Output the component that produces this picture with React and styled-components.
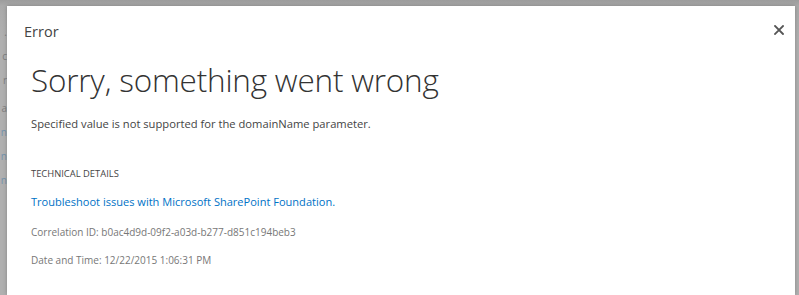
import React from "react";
import styled, { createGlobalStyle } from "styled-components";

const Global = createGlobalStyle`
  html, body { margin: 0; padding: 0; }
  body { width: 799px; height: 295px; overflow: hidden; font-family: "Open Sans", "Noto Sans", sans-serif; }
`;

const Backdrop = styled.div`
  width: 799px;
  height: 295px;
  background: linear-gradient(#9c9c9c 0px, #aaaaaa 6px, #b0b0b0 40px, #b0b0b0 100%);
  display: flex;
  box-sizing: border-box;
  padding: 6px 4px 0 0;
  overflow: hidden;
`;

const PageStrip = styled.div`
  width: 7px;
  flex: none;
  display: flex;
  flex-direction: column;
  align-items: flex-end;
  padding-top: 20px;
  gap: 12px;
  font-size: 10px;
  line-height: 12px;
  opacity: 0.45;
`;

const Letter = styled.span`
  color: ${(p) => (p.$link ? "#2a6fa8" : "#444")};
  margin-top: ${(p) => p.$gap || 0}px;
  white-space: nowrap;
`;

const Dialog = styled.div`
  flex: 1;
  background: #fff;
  position: relative;
  display: flex;
  flex-direction: column;
  padding: 16px 0 0 17px;
  box-shadow: 0 0 4px rgba(0, 0, 0, 0.25);
`;

const Title = styled.div`
  font-size: 14.5px;
  font-weight: 400;
  color: #444;
  line-height: 20px;
`;

const Close = styled.button`
  position: absolute;
  top: 16px;
  right: 8px;
  width: 16px;
  height: 16px;
  padding: 0;
  border: 0;
  background: none;
  display: flex;
  align-items: center;
  justify-content: center;
`;

const Body = styled.div`
  padding: 18px 0 0 7px;
  display: flex;
  flex-direction: column;
`;

const Heading = styled.h1`
  margin: 0;
  font-size: 31.5px;
  font-weight: 300;
  color: #333;
  line-height: 40px;
  letter-spacing: -0.2px;
`;

const Message = styled.p`
  margin: 16px 0 0;
  font-size: 11.2px;
  color: #444;
  line-height: 16px;
`;

const Section = styled.div`
  margin-top: 35px;
  font-size: 9.4px;
  color: #444;
  line-height: 14px;
`;

const Link = styled.a`
  margin-top: 13px;
  font-size: 11.05px;
  color: #0072c6;
  text-decoration: none;
  line-height: 16px;
`;

const Detail = styled.div`
  margin-top: ${(p) => p.$gap}px;
  font-size: 10px;
  color: #777;
  line-height: 16px;
`;

export default function App() {
  return (
    <>
      <Global />
      <Backdrop>
        <PageStrip>
          <Letter>.</Letter>
          <Letter>c</Letter>
          <Letter>r</Letter>
          <Letter $gap={4}>a</Letter>
          <Letter $link>n</Letter>
          <Letter $link>n</Letter>
          <Letter $link>n</Letter>
        </PageStrip>
        <Dialog>
          <Title>Error</Title>
          <Close aria-label="Close">
            <svg width="10" height="10" viewBox="0 0 10 10">
              <path d="M1 1 L9 9 M9 1 L1 9" stroke="#555" strokeWidth="1.8" strokeLinecap="square" />
            </svg>
          </Close>
          <Body>
            <Heading>Sorry, something went wrong</Heading>
            <Message>Specified value is not supported for the domainName parameter.</Message>
            <Section>TECHNICAL DETAILS</Section>
            <Link href="#">Troubleshoot issues with Microsoft SharePoint Foundation.</Link>
            <Detail $gap={14}>Correlation ID: b0ac4d9d-09f2-a03d-b277-d851c194beb3</Detail>
            <Detail $gap={12}>Date and Time: 12/22/2015 1:06:31 PM</Detail>
          </Body>
        </Dialog>
      </Backdrop>
    </>
  );
}
